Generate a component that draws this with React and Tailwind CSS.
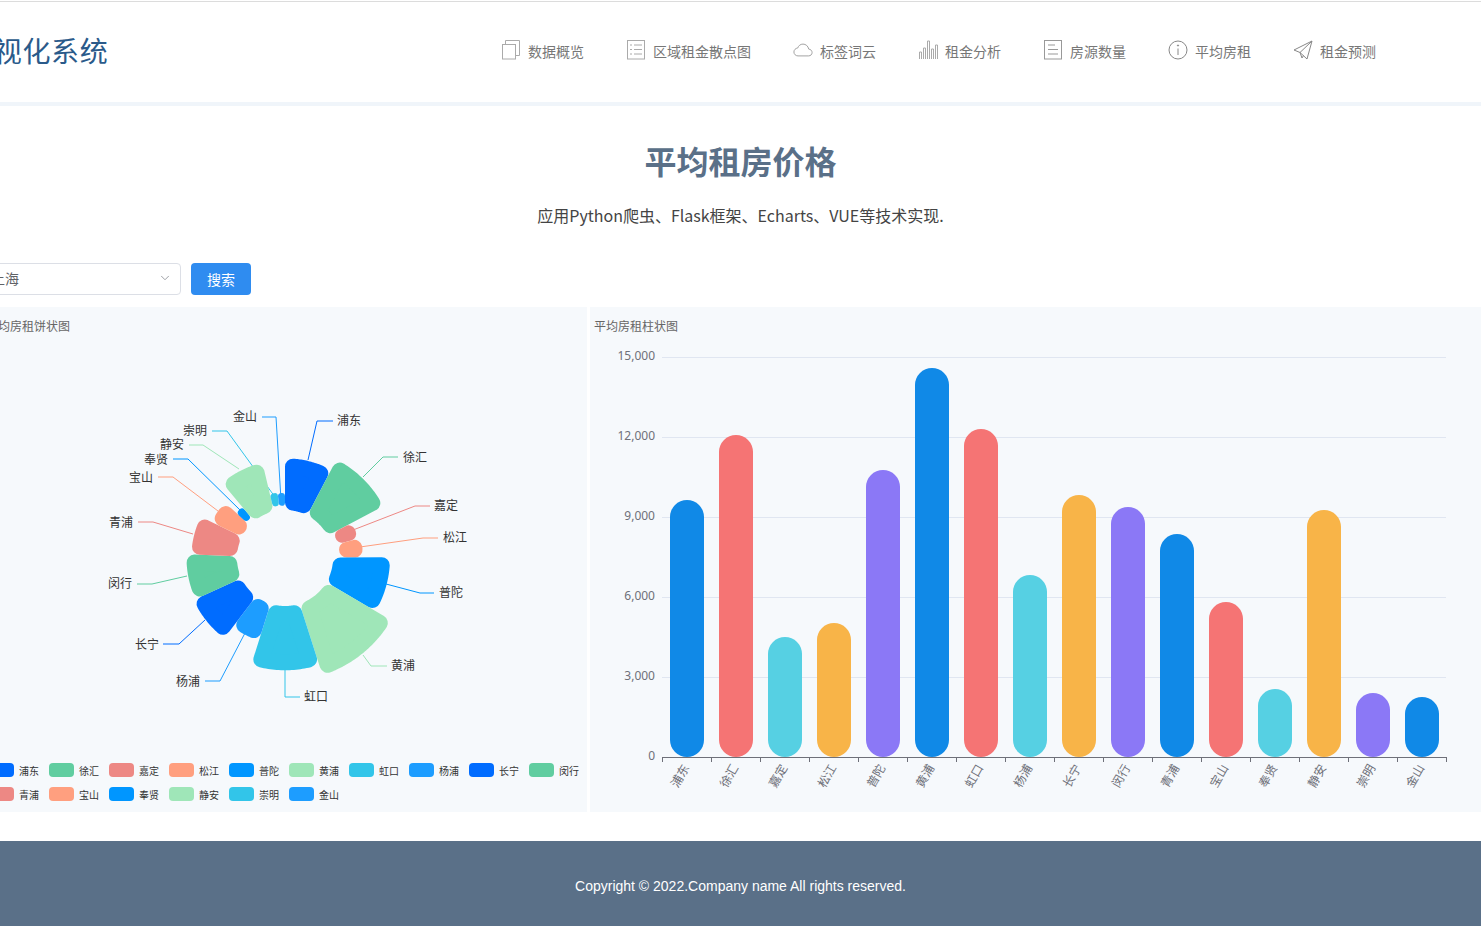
import { ChevronDown } from "lucide-react";

const CJK = "font-['Noto_Sans_CJK_SC','Liberation_Sans',sans-serif]";

const barColors = ["#1089e7", "#f57474", "#56d0e3", "#f8b448", "#8b78f6"];
const pieColors = ["#006cff", "#60cda0", "#ed8884", "#ff9f7f", "#0096ff", "#9fe6b8", "#32c5e9", "#1d9dff"];

const districts = [
  { name: "浦东", value: 9637, line: [[308, 460], [317, 421], [333, 421]], labelX: 337, labelY: 420, end: false },
  { name: "徐汇", value: 12075, line: [[363, 477], [383, 457], [398, 457]], labelX: 403, labelY: 457, end: false },
  { name: "嘉定", value: 4500, line: [[353, 530], [415, 506], [430, 506]], labelX: 434, labelY: 505, end: false },
  { name: "松江", value: 5025, line: [[360, 547], [423, 538], [438, 538]], labelX: 443, labelY: 537, end: false },
  { name: "普陀", value: 10762, line: [[386, 584], [420, 593], [434, 593]], labelX: 439, labelY: 592, end: false },
  { name: "黄浦", value: 14587, line: [[363, 655], [371, 666], [387, 666]], labelX: 391, labelY: 665, end: false },
  { name: "虹口", value: 12300, line: [[285, 668], [285, 697], [300, 697]], labelX: 304, labelY: 696, end: false },
  { name: "杨浦", value: 6825, line: [[245, 633], [220, 681], [205, 681]], labelX: 200, labelY: 681, end: true },
  { name: "长宁", value: 9825, line: [[205, 620], [179, 644], [163, 644]], labelX: 159, labelY: 644, end: true },
  { name: "闵行", value: 9375, line: [[187, 576], [152, 584], [137, 584]], labelX: 132, labelY: 583, end: true },
  { name: "青浦", value: 8362, line: [[193, 534], [153, 522], [138, 522]], labelX: 133, labelY: 522, end: true },
  { name: "宝山", value: 5812, line: [[218, 511], [173, 477], [158, 477]], labelX: 153, labelY: 477, end: true },
  { name: "奉贤", value: 2550, line: [[240, 510], [188, 459], [173, 459]], labelX: 168, labelY: 459, end: true },
  { name: "静安", value: 9262, line: [[239, 469], [203, 445], [189, 445]], labelX: 184, labelY: 444, end: true },
  { name: "崇明", value: 2400, line: [[275, 497], [227, 431], [212, 431]], labelX: 207, labelY: 430, end: true },
  { name: "金山", value: 2250, line: [[281, 500], [276, 417], [262, 417]], labelX: 257, labelY: 416, end: true },
];

const navItems = [
  { label: "数据概览", icon: FilesIcon },
  { label: "区域租金散点图", icon: ListIcon },
  { label: "标签词云", icon: CloudIcon },
  { label: "租金分析", icon: BarsIcon },
  { label: "房源数量", icon: DocIcon },
  { label: "平均房租", icon: InfoIcon },
  { label: "租金预测", icon: PlaneIcon },
];

function FilesIcon() {
  return (
    <svg viewBox="0 0 20 20" className="h-5 w-5" fill="none" stroke="#aaa" strokeWidth="1">
      <rect x="1.5" y="4.5" width="13" height="14.5" />
      <path d="M4.5 4.5V0.5H18.5V15.5H14.5" />
    </svg>
  );
}

function ListIcon() {
  return (
    <svg viewBox="0 0 20 20" className="h-5 w-5" fill="none" stroke="#aaa" strokeWidth="1">
      <rect x="1.5" y="0.5" width="17" height="18.5" />
      <path d="M4 5H6M8 5H16M4 9.5H6M8 9.5H16M4 14H6M8 14H16" />
    </svg>
  );
}

function CloudIcon() {
  return (
    <svg viewBox="0 0 22 16" className="h-4 w-5 overflow-visible" fill="none" stroke="#999" strokeWidth="1">
      <path d="M5.5 14.5H17C19.5 14.5 21 12.8 21 10.8C21 8.8 19.5 7.2 17.3 7C16.6 3.6 14 1.5 11 1.5C8.2 1.5 6 3.2 5.2 5.8C2.8 6 1 8 1 10.2C1 12.6 3 14.5 5.5 14.5Z" />
    </svg>
  );
}

function BarsIcon() {
  return (
    <svg viewBox="0 0 20 20" className="h-5 w-5" fill="none" stroke="#aaa" strokeWidth="1">
      <path d="M1.5 19V12H3.5V19M5.5 19V8H7.5V19M9.5 19V1H11.5V19M13.5 19V9H15.5V19M17.5 19V5H19.5V19" />
    </svg>
  );
}

function DocIcon() {
  return (
    <svg viewBox="0 0 20 20" className="h-5 w-5" fill="none" stroke="#999" strokeWidth="1">
      <rect x="1.5" y="0.5" width="17" height="18.5" />
      <path d="M5 5H12M5 9.5H15M5 14H15" />
    </svg>
  );
}

function InfoIcon() {
  return (
    <svg viewBox="0 0 20 20" className="h-5 w-5" fill="none" stroke="#888" strokeWidth="1">
      <circle cx="10" cy="10" r="9" />
      <path d="M10 8.5V15" />
      <circle cx="10" cy="5.5" r="0.6" fill="#888" />
    </svg>
  );
}

function PlaneIcon() {
  return (
    <svg viewBox="0 0 20 20" className="h-5 w-5" fill="none" stroke="#888" strokeWidth="1">
      <path d="M19 1L1 10L7 12.5L19 1ZM19 1L14 19L7 12.5M7 12.5L9 18L10.5 15.5" strokeLinejoin="round" />
    </svg>
  );
}

function Header() {
  return (
    <header className="mt-px flex h-[105px] items-center border-t border-b-4 border-t-[#dcdcdc] border-b-[#f0f5fa] bg-white pb-[4px]">
      <h1 className={`-ml-[35px] w-[536px] shrink-0 whitespace-nowrap text-[28px] font-normal tracking-[0.7px] text-[#2a5a8a] ${CJK}`}>
        可视化系统
      </h1>
      <nav className="flex gap-[42px] pt-[2px]">
        {navItems.map(({ label, icon: Icon }) => (
          <a key={label} className={`flex items-center gap-[7px] text-sm text-[#777] ${CJK}`}>
            <span className="mb-[3px] flex h-5 w-5 items-center">
              <Icon />
            </span>
            <span>{label}</span>
          </a>
        ))}
      </nav>
    </header>
  );
}

function Filter() {
  return (
    <div className="-ml-[18px] mt-[36px] flex gap-[10px]">
      <div className={`flex h-8 w-[199px] items-center justify-between rounded border border-[#dcdfe6] bg-white pb-[2px] pl-[8px] pr-[8px] text-sm text-[#606266] ${CJK}`}>
        <span>上海</span>
        <ChevronDown size={14} color="#909399" strokeWidth={1.5} />
      </div>
      <button className={`h-8 w-[60px] rounded bg-[#2f8cf0] text-sm text-white ${CJK}`}>搜索</button>
    </div>
  );
}

// a rounded ring sector: an inset outline with a thick round-joined stroke
function sectorPoints(cx, cy, start, end, r0, r1) {
  const half = (end - start) / 2;
  const s = Math.sin(half);
  const c = Math.min(8, (0.9 * r1 * s) / (1 + s));
  const outer = r1 - c;
  const inner = Math.max(r0 + c, c / s);
  const arc = (rho, from, to) => {
    const out = [];
    for (let i = 0; i <= 24; i++) {
      const a = from + ((to - from) * i) / 24;
      out.push(`${cx + rho * Math.sin(a)},${cy - rho * Math.cos(a)}`);
    }
    return out;
  };
  const dOuter = Math.min(Math.asin(c / outer), half);
  const dInner = Math.min(Math.asin(c / inner), half);
  const points = [
    ...arc(outer, start + dOuter, end - dOuter),
    ...arc(inner, end - dInner, start + dInner),
  ];
  return { points: points.join(" "), width: c * 2 };
}

function PieChart() {
  const total = districts.reduce((sum, d) => sum + d.value, 0);
  let angle = 0;
  const slices = districts.map((d, i) => {
    const start = angle;
    angle += (d.value / total) * Math.PI * 2;
    const r1 = 65 + (d.value - 2250) * 0.0047;
    return { ...d, color: pieColors[i % 8], ...sectorPoints(285, 558, start, angle, 48, r1) };
  });

  return (
    <svg viewBox="-18 340 605 420" className="h-[420px] w-[605px] shrink-0">
      {slices.map((d) => (
        <polyline key={d.name} points={d.line.join(" ")} fill="none" stroke={d.color} />
      ))}
      {slices.map((d) => (
        <polygon key={d.name} points={d.points} fill={d.color} stroke={d.color} strokeWidth={d.width} strokeLinejoin="round" />
      ))}
      {slices.map((d) => (
        <text
          key={d.name}
          x={d.labelX}
          y={d.labelY + 5}
          textAnchor={d.end ? "end" : "start"}
          fill="#333"
          className={`text-xs ${CJK}`}
        >
          {d.name}
        </text>
      ))}
    </svg>
  );
}

function BarChart() {
  const ticks = [0, 3000, 6000, 9000, 12000, 15000];
  const y = (v) => 757 - (v / 15000) * 400;
  const step = 49;

  return (
    <svg viewBox="590 340 891 472" className="h-[472px] w-[891px] shrink-0">
      {ticks.map((t) => (
        <g key={t}>
          {t > 0 && <line x1="662" x2="1446" y1={y(t) + 0.5} y2={y(t) + 0.5} stroke="#e0e6f1" />}
          <text x="655" y={y(t) + 3} textAnchor="end" fill="#6e7079" className="font-['Noto_Sans',sans-serif] text-xs">
            {t.toLocaleString("en-US")}
          </text>
        </g>
      ))}
      {districts.map((d, i) => {
        const left = 670 + i * step;
        return (
          <g key={d.name}>
            <rect x={left} y={y(d.value)} width="34" height={757 - y(d.value)} rx="17" fill={barColors[i % 5]} />
            <text
              transform={`translate(${left + 17} 766) rotate(-60)`}
              textAnchor="end"
              dominantBaseline="middle"
              fill="#6e7079"
              className={`text-xs ${CJK}`}
            >
              {d.name}
            </text>
          </g>
        );
      })}
      <path
        d={`M662 757.5H1446.5${Array.from({ length: 17 }, (_, i) => `M${662.5 + i * step} 757V762`).join("")}`}
        stroke="#6e7079"
        fill="none"
      />
    </svg>
  );
}

function Legend() {
  return (
    <div className="mt-[3px] flex flex-wrap gap-x-[10px] gap-y-[10px] pl-[7px]">
      {districts.map((d, i) => (
        <div key={d.name} className={`flex h-[14px] w-[50px] items-center gap-[5px] text-[10px] text-[#333] ${CJK}`}>
          <span className="h-[14px] w-[25px] shrink-0 rounded" style={{ backgroundColor: pieColors[i % 8] }} />
          <span>{d.name}</span>
        </div>
      ))}
    </div>
  );
}

function ChartTitle({ children }) {
  return (
    <h3 className={`flex h-[33px] shrink-0 items-center pl-1 pt-[5px] text-xs text-[#666] ${CJK}`}>{children}</h3>
  );
}

function Charts() {
  return (
    <div className="-ml-[18px] mt-3 flex h-[505px] gap-[3px]">
      <section className="flex w-[605px] shrink-0 flex-col bg-[#f6f9fc]">
        <ChartTitle>平均房租饼状图</ChartTitle>
        <PieChart />
        <Legend />
      </section>
      <section className="flex flex-1 flex-col bg-[#f6f9fc]">
        <ChartTitle>平均房租柱状图</ChartTitle>
        <BarChart />
      </section>
    </div>
  );
}

export default function App() {
  return (
    <div className="flex h-[926px] w-full flex-col overflow-hidden bg-white">
      <Header />
      <main className="flex-1">
        <h2 className={`mt-[29px] text-center text-[32px] font-bold leading-[50px] text-[#5a7088] ${CJK}`}>平均租房价格</h2>
        <p className={`mt-[18px] text-center text-base leading-6 text-[#444] ${CJK}`}>
          应用Python爬虫、Flask框架、Echarts、VUE等技术实现.
        </p>
        <Filter />
        <Charts />
      </main>
      <footer className="flex h-[85px] items-center justify-center bg-[#5a7088] pt-[4px] font-['Liberation_Sans',sans-serif] text-sm text-white">
        Copyright © 2022.Company name All rights reserved.
      </footer>
    </div>
  );
}
